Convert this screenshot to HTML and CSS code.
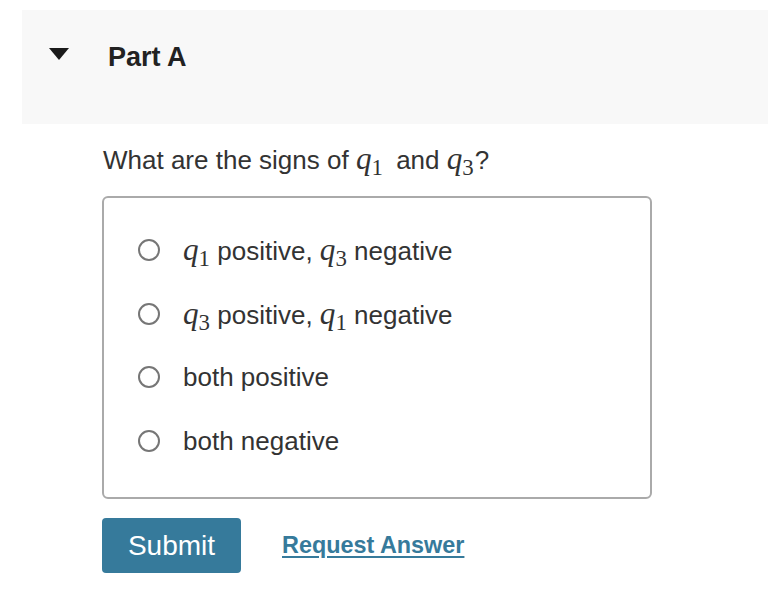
FILE: index.html
```html
<!DOCTYPE html>
<html>
<head>
<meta charset="utf-8">
<link rel="stylesheet" href="styles.css">
</head>
<body>
<div class="part-header">
  <svg class="caret" width="20" height="12" viewBox="0 0 20 12"><path d="M0 0 H20 L10 12 Z" fill="#1a1a1a"/></svg>
  <h2 class="part-title">Part A</h2>
</div>
<div class="part-body">
  <p class="question">What are the signs of <span class="math"><i>q</i><sub>1</sub></span> and <span class="math last"><i>q</i><sub>3</sub></span>?</p>
  <div class="choices">
    <label class="choice"><span class="radio"></span><span class="label"><span class="math"><i>q</i><sub>1</sub></span> positive, <span class="math"><i>q</i><sub>3</sub></span> negative</span></label>
    <label class="choice"><span class="radio"></span><span class="label"><span class="math"><i>q</i><sub>3</sub></span> positive, <span class="math"><i>q</i><sub>1</sub></span> negative</span></label>
    <label class="choice"><span class="radio"></span><span class="label">both positive</span></label>
    <label class="choice"><span class="radio"></span><span class="label">both negative</span></label>
  </div>
  <div class="actions">
    <button class="submit">Submit</button>
    <a class="request" href="#">Request Answer</a>
  </div>
</div>
</body>
</html>
```

FILE: styles.css
```css
html, body {
  margin: 0;
  padding: 0;
  background: #fff;
}
body {
  font-family: "Liberation Sans", Arial, sans-serif;
  color: #333;
}
.part-header {
  margin: 10px 0 0 22px;
  height: 114px;
  background: #f8f8f8;
  display: flex;
  align-items: center;
}
.caret {
  margin-left: 27px;
  margin-top: -26px;
}
.part-title {
  margin: 0 0 0 39px;
  margin-top: -20px;
  font-size: 27px;
  font-weight: bold;
  color: #222;
}
.part-body {
  padding-left: 102px;
}
.question {
  margin: 19px 0 0 1px;
  font-size: 26px;
  line-height: 32px;
  height: 32px;
}
.question .math {
  margin-right: 6px;
}
.question .math.last {
  margin-right: 1px;
}
.math {
  font-family: "Liberation Serif", "Times New Roman", serif;
  white-space: nowrap;
}
.math i {
  font-size: 1.2em;
}
.math sub {
  font-size: 0.88em;
  vertical-align: -0.25em;
  line-height: 0;
}
.choices {
  box-sizing: border-box;
  margin-top: 21px;
  width: 550px;
  border: 2px solid #aaa;
  border-radius: 6px;
  padding: 32px 0 36px 33px;
  display: flex;
  flex-direction: column;
  gap: 23.7px;
}
.choice {
  display: flex;
  align-items: center;
  height: 40px;
  font-size: 26px;
}
.radio {
  width: 18px;
  height: 18px;
  border: 2px solid #767676;
  border-radius: 50%;
  margin-left: 1px;
  margin-right: 23px;
  flex: none;
}
.actions {
  margin-top: 19px;
  display: flex;
  align-items: center;
  gap: 41px;
}
.submit {
  width: 139px;
  height: 55px;
  border: none;
  border-radius: 4px;
  background: #367a9b;
  color: #fff;
  font-family: "Liberation Sans", Arial, sans-serif;
  font-size: 28px;
  padding: 0;
}
.request {
  color: #367a9b;
  font-weight: bold;
  font-size: 23.4px;
  text-decoration: underline;
  text-underline-offset: 3px;
}
```
